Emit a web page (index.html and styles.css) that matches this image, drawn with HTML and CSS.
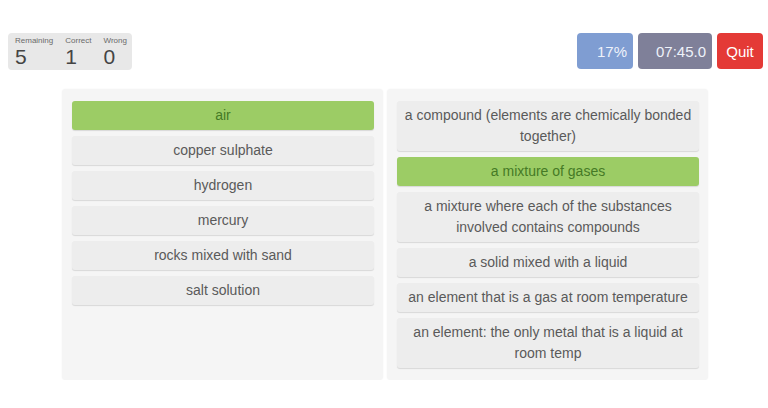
FILE: index.html
```html
<!DOCTYPE html>
<html lang="en">
<head>
    <meta charset="UTF-8">
    <meta name="viewport" content="width=device-width, initial-scale=1.0">
    <title>Match up</title>
    <link rel="stylesheet" href="styles.css">
</head>
<body>
    <!-- Barra superior -->
    <div class="barra">
        <div class="marcador">
            <div class="dato">
                <span class="etiqueta">Remaining</span>
                <span class="numero">5</span>
            </div>
            <div class="dato">
                <span class="etiqueta">Correct</span>
                <span class="numero">1</span>
            </div>
            <div class="dato">
                <span class="etiqueta">Wrong</span>
                <span class="numero">0</span>
            </div>
        </div>

        <div class="controles">
            <div class="caja porcentaje">17%</div>
            <div class="caja reloj">07:45.0</div>
            <button class="caja salir">Quit</button>
        </div>
    </div>

    <!-- Tablero -->
    <div class="tablero">
        <div class="columna">
            <div class="ficha correcta">air</div>
            <div class="ficha">copper sulphate</div>
            <div class="ficha">hydrogen</div>
            <div class="ficha">mercury</div>
            <div class="ficha">rocks mixed with sand</div>
            <div class="ficha">salt solution</div>
        </div>
        <div class="columna">
            <div class="ficha">a compound (elements are chemically bonded together)</div>
            <div class="ficha correcta">a mixture of gases</div>
            <div class="ficha">a mixture where each of the substances involved contains compounds</div>
            <div class="ficha">a solid mixed with a liquid</div>
            <div class="ficha">an element that is a gas at room temperature</div>
            <div class="ficha">an element: the only metal that is a liquid at room temp</div>
        </div>
    </div>
</body>
</html>
```

FILE: styles.css
```css
body {
    font-family: 'Liberation Sans', Arial, sans-serif;
    background-color: #ffffff;
    margin: 0;
    padding: 33px 5px 0 8px;
    color: #555555;
}

.barra {
    display: flex;
    justify-content: space-between;
    align-items: flex-start;
}

.marcador {
    display: flex;
    gap: 12px;
    background-color: #e8e8e8;
    border-radius: 4px;
    padding: 3px 6px 2px 7px;
    width: 124px;
    height: 37px;
    box-sizing: border-box;
}

.dato {
    display: flex;
    flex-direction: column;
}

.etiqueta {
    font-size: 8px;
    color: #6a6a6a;
    line-height: 10px;
}

.numero {
    font-size: 21px;
    color: #444444;
    line-height: 22px;
}

.controles {
    display: flex;
    gap: 5px;
}

.caja {
    height: 36px;
    border: none;
    border-radius: 4px;
    color: #eef2fa;
    font-family: inherit;
    font-size: 15px;
    display: flex;
    align-items: center;
    box-sizing: border-box;
}

.porcentaje {
    background-color: #7f9dd2;
    width: 56px;
    justify-content: flex-end;
    padding-right: 6px;
}

.reloj {
    background-color: #7f8099;
    width: 74px;
    justify-content: flex-end;
    padding-right: 6px;
}

.salir {
    background-color: #e43a36;
    width: 46px;
    justify-content: center;
    color: #ffffff;
    cursor: pointer;
}

.tablero {
    display: flex;
    justify-content: center;
    gap: 4px;
    margin-top: 19px;
    margin-left: -6px;
    margin-right: -5px;
}

.columna {
    width: 321px;
    height: 291px;
    box-sizing: border-box;
    background-color: #f5f5f5;
    border-radius: 4px;
    box-shadow: 0 0 2px rgba(0,0,0,0.06);
    padding: 12px 9px 0 10px;
    display: flex;
    flex-direction: column;
    gap: 6px;
}

.ficha {
    background-color: #ededed;
    border-radius: 3px;
    box-shadow: 0 1px 1px rgba(0,0,0,0.12);
    text-align: center;
    font-size: 14px;
    line-height: 21px;
    padding: 4px 2px;
    color: #5a5a5a;
}

.correcta {
    background-color: #9ccc65;
    color: #457a26;
}
```
